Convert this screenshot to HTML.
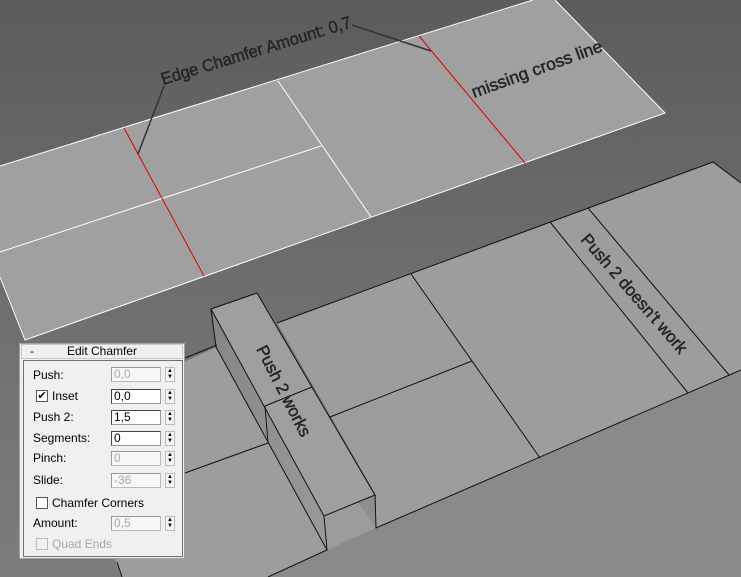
<!DOCTYPE html>
<html><head><meta charset="utf-8"><style>
html,body{margin:0;padding:0;width:741px;height:577px;overflow:hidden;background:#7a7a7a}
svg{position:absolute;left:0;top:0}
.p{position:absolute;font-family:"Liberation Sans",sans-serif;font-size:12px;color:#000}
#panel{left:19px;top:343px;width:166px;height:216px;background:#f0f0f0;border:1px solid #a0a0a0;box-sizing:border-box}
#hdr{position:absolute;left:1px;top:0;width:162px;height:15px;border:1px solid #c8c8c8;box-sizing:border-box;background:#f0f0f0;text-align:center;line-height:13px;font-size:12px}
#hdr span{position:absolute;left:8px;top:0}
#body{position:absolute;left:3px;top:16px;width:160px;height:197px;border:1px solid #707070;box-sizing:border-box;background:#f0f0f0}
.l{position:absolute;left:9px;font-size:12px}
.in{position:absolute;left:87px;width:50px;height:15px;box-sizing:border-box;border:1px solid #9a9a9a;border-top-color:#444;border-left-color:#444;background:#fff;font-size:12px;line-height:13px;padding-left:2px}
.in.d{border-color:#bbb;border-top-color:#999;border-left-color:#999;color:#a8a8a8;background:#f7f7f7}
.sp{position:absolute;left:141px;width:10px;height:15px;box-sizing:border-box;border:1px solid #bbb;background:#f4f4f4;font-size:6px;line-height:6px;text-align:center}
.cb{position:absolute;left:12px;width:12px;height:12px;box-sizing:border-box;border:1px solid #555;background:#fff;font-size:11px;line-height:10px;text-align:center}
</style></head><body>
<svg width="741" height="577" viewBox="0 0 741 577">
<defs><linearGradient id="bg" x1="0" y1="0" x2="0" y2="1"><stop offset="0" stop-color="#5c5c5c"/><stop offset="0.5" stop-color="#6e6e6e"/><stop offset="1" stop-color="#7c7c7c"/></linearGradient>
<linearGradient id="side" x1="0" y1="0" x2="1" y2="0"><stop offset="0" stop-color="#868686"/><stop offset="1" stop-color="#9a9a9a"/></linearGradient></defs>
<rect width="741" height="577" fill="url(#bg)"/>
<polygon points="741,183 741,577 268,577 327,550 376,528 741,370" fill="#8a8a8a"/>
<polygon points="0,166 533,0 555,0 665,113 25,340 0,277" fill="#a0a0a0"/>
<g stroke="#fff" stroke-width="1" fill="none">
<polyline points="0,166 533,0"/><polyline points="555,0 665,113 25,340 0,277"/>
<line x1="0" y1="252" x2="321" y2="146"/><line x1="278" y1="81" x2="371" y2="217"/>
</g>
<g stroke="#e00000" stroke-width="1"><line x1="124" y1="128" x2="204" y2="276"/><line x1="419" y1="36" x2="525" y2="163"/></g>
<g stroke="#333" stroke-width="1.5"><line x1="164" y1="86" x2="138" y2="154"/><line x1="352" y1="25" x2="431" y2="51"/></g>
<polygon points="216,347 327,550 268,577 122,577 60,420" fill="#9d9d9d"/>
<polygon points="277,323 713,162 741,183 741,370 376,528 376,495" fill="#9d9d9d"/>
<polygon points="211,309 324,516 327,550 216,347" fill="url(#side)"/>
<polygon points="211,309 257,293 375,495 324,516" fill="#9f9f9f"/>
<polygon points="324,516 375,495 376,528 327,550" fill="#9c9c9c"/>
<polygon points="358,502 375,495 376,528" fill="#8e8e8e"/>
<g stroke="#111" stroke-width="1" fill="none">
<polyline points="185,358 217,345"/>
<polyline points="277,323 713,162 741,183"/>
<polyline points="211,309 257,293 375,495 376,528 741,370"/>
<polyline points="211,309 324,516 375,495"/>
<polyline points="211,309 216,347 327,550 268,577"/>
<line x1="324" y1="516" x2="327" y2="550"/>
<line x1="265" y1="406" x2="312" y2="387"/><line x1="265" y1="406" x2="268" y2="443"/>
<line x1="185" y1="473" x2="268" y2="443"/>
<line x1="330" y1="417" x2="472" y2="361"/>
<line x1="411" y1="274" x2="540" y2="458"/>
<line x1="550" y1="222" x2="688" y2="393"/><line x1="588" y1="208" x2="729" y2="375"/>
<line x1="117" y1="562" x2="122" y2="577"/>
</g>
<g font-family="Liberation Sans, sans-serif" font-size="17" fill="#262626" stroke="#262626" stroke-width="0.5">
<text x="163" y="85" transform="rotate(-17 163 85)" textLength="198" lengthAdjust="spacingAndGlyphs">Edge Chamfer Amount: 0,7</text>
<text x="474" y="98" transform="rotate(-20 474 98)" textLength="138" lengthAdjust="spacingAndGlyphs">missing cross line</text>
<text x="256" y="349" transform="rotate(63 256 349)" textLength="100" lengthAdjust="spacingAndGlyphs">Push 2 works</text>
<text x="580" y="240" transform="rotate(49 580 240)" textLength="152" lengthAdjust="spacingAndGlyphs">Push 2 doesn't work</text>
</g>
</svg>
<div id="panel" class="p">
<div id="hdr"><span>-</span>Edit Chamfer</div>
<div id="body">
<div class="l" style="top:7px">Push:</div><div class="in d" style="top:6px">0,0</div><div class="sp" style="top:6px">▲<br>▼</div>
<div class="cb" style="top:29px">✔</div><div class="l" style="top:28px;left:28px">Inset</div><div class="in" style="top:28px">0,0</div><div class="sp" style="top:28px">▲<br>▼</div>
<div class="l" style="top:49px">Push 2:</div><div class="in" style="top:49px">1,5</div><div class="sp" style="top:49px">▲<br>▼</div>
<div class="l" style="top:70px">Segments:</div><div class="in" style="top:70px">0</div><div class="sp" style="top:70px">▲<br>▼</div>
<div class="l" style="top:90px">Pinch:</div><div class="in d" style="top:90px">0</div><div class="sp" style="top:90px">▲<br>▼</div>
<div class="l" style="top:112px">Slide:</div><div class="in d" style="top:112px">-36</div><div class="sp" style="top:112px">▲<br>▼</div>
<div class="cb" style="top:136px"></div><div class="l" style="top:135px;left:28px">Chamfer Corners</div>
<div class="l" style="top:155px">Amount:</div><div class="in d" style="top:155px">0,5</div><div class="sp" style="top:155px">▲<br>▼</div>
<div class="cb" style="top:177px;border-color:#bbb;background:#f0f0f0"></div><div class="l" style="top:176px;left:28px;color:#a8a8a8">Quad Ends</div>
</div></div>
</body></html>
